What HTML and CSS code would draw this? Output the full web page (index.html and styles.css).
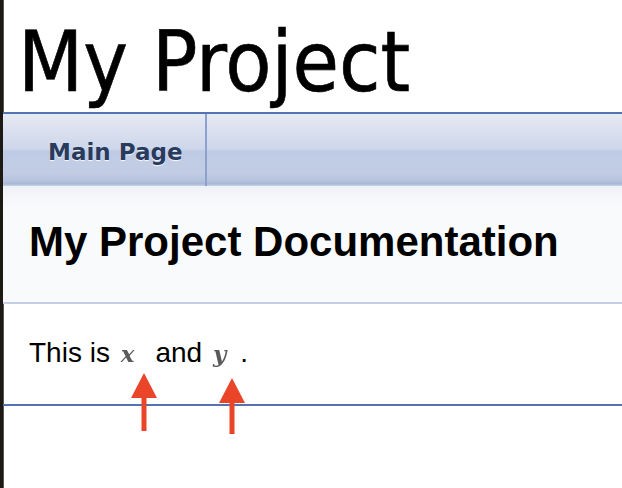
FILE: index.html
```html
<!DOCTYPE html>
<html>
<head>
<meta charset="utf-8">
<title>My Project: My Project Documentation</title>
<link rel="stylesheet" href="styles.css">
</head>
<body>
<div class="page">
  <div class="titlearea">
    <div class="projectname">My Project</div>
  </div>
  <div class="tabs">
    <ul class="tablist">
      <li class="tab current"><span>Main Page</span></li>
    </ul>
  </div>
  <div class="header">
    <div class="headertitle">My Project Documentation</div>
  </div>
  <div class="contents">
    <p class="para">This is <span class="math mx">x</span>and <span class="math my">y</span>.</p>
  </div>
  <div class="footer"></div>
  <svg class="arrows" width="622" height="488" viewBox="0 0 622 488">
    <g fill="#ea4429">
      <polygon points="144,373 157,398 131,398"/>
      <rect x="141.5" y="396" width="5" height="35"/>
      <polygon points="232,378 245,403 219,403"/>
      <rect x="229.5" y="401" width="5" height="33"/>
    </g>
  </svg>
</div>
</body>
</html>
```
FILE: styles.css
```css
html, body {
  margin: 0;
  padding: 0;
  background: #ffffff;
}

body {
  width: 622px;
  height: 488px;
  overflow: hidden;
}

.page {
  position: relative;
  height: 488px;
  border-left: 3px solid #1d1914;
  box-shadow: inset 1px 0 0 #5a5650;
  font-family: "Liberation Sans", Arial, sans-serif;
}

.titlearea {
  height: 92px;
  padding: 20px 0 0 15px;
  border-bottom: 2px solid #5373b4;
}

.projectname {
  font-family: "DejaVu Sans Condensed", "DejaVu Sans", sans-serif;
  font-stretch: condensed;
  font-size: 84px;
  line-height: 84px;
  color: #000;
  -webkit-text-stroke: 0.6px #000;
}

.tabs {
  height: 72px;
  background: linear-gradient(to bottom,
    #e6eaf4 0%,
    #dbe1ef 20%,
    #ced7ea 48%,
    #bfcbe4 52%,
    #c2cde5 82%,
    #b7c4df 92%,
    #a9b8d8 97%,
    #c9d3e8 100%);
}

.tablist {
  display: flex;
  margin: 0;
  padding: 0;
  list-style: none;
  height: 72px;
}

.tab {
  display: flex;
  align-items: center;
  padding: 3px 22px 0 45px;
  border-right: 2px solid #8ca1cd;
  font-family: "DejaVu Sans", sans-serif;
  font-weight: bold;
  font-size: 23px;
  color: #283a5d;
  text-shadow: 0 1px 1px rgba(255, 255, 255, 0.9);
}

.header {
  padding: 32px 0 36px 26px;
  background: linear-gradient(to bottom, #eef1f7 0px, #f6f7fb 12px, #f9fafc 24px, #f9fafc 100%);
  border-bottom: 2px solid #c4cfe5;
}

.headertitle {
  font-family: "Liberation Sans", Arial, sans-serif;
  font-weight: bold;
  font-size: 42px;
  line-height: 48px;
  color: #000;
}

.contents {
  padding: 33px 0 35px 26px;
  border-bottom: 2px solid #5373b4;
}

.para {
  margin: 0;
  font-size: 28px;
  line-height: 31px;
  color: #000;
}

.math {
  display: inline-block;
  font-family: "DejaVu Serif", "Liberation Serif", serif;
  font-style: italic;
  font-weight: bold;
  color: #5a5a5a;
  filter: blur(0.6px);
  font-size: 23px;
}

.mx {
  margin: 0 21px 0 3px;
}

.my {
  margin: 0 14px 0 3px;
}

.arrows {
  position: absolute;
  left: -3px;
  top: 0;
  pointer-events: none;
}
```
